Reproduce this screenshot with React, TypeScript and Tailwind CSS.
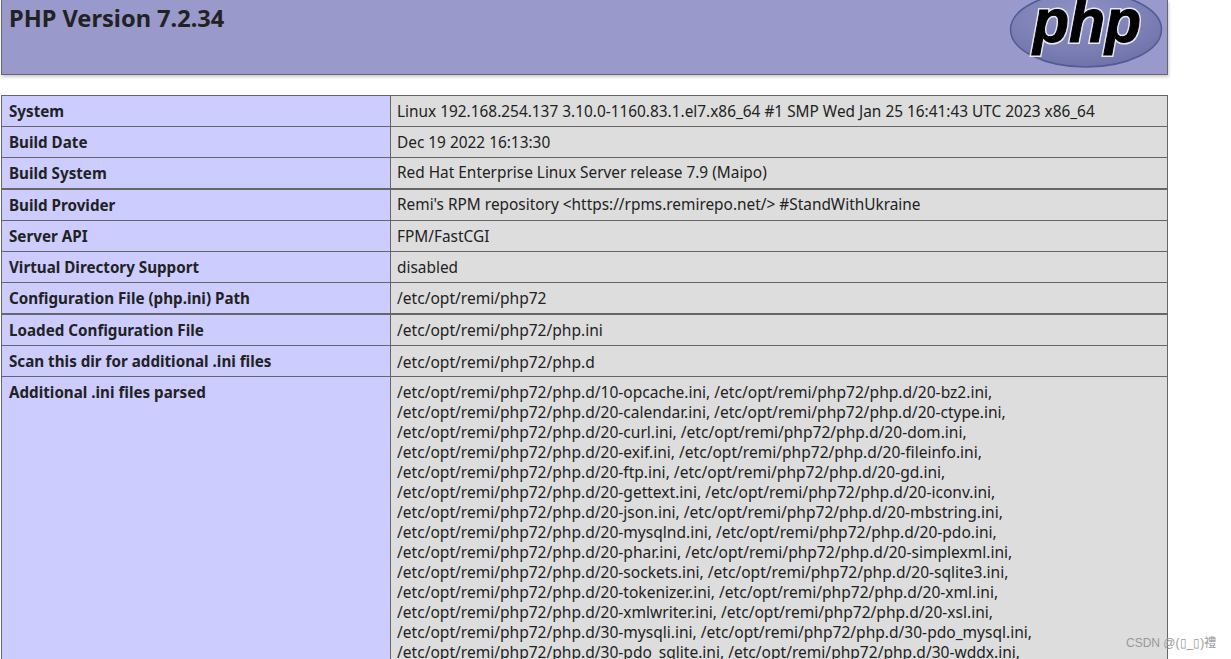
const rows: [string, string, boolean][] = [
  ["System", "Linux 192.168.254.137 3.10.0-1160.83.1.el7.x86_64 #1 SMP Wed Jan 25 16:41:43 UTC 2023 x86_64", false],
  ["Build Date", "Dec 19 2022 16:13:30", false],
  ["Build System", "Red Hat Enterprise Linux Server release 7.9 (Maipo)", false],
  ["Build Provider", "Remi's RPM repository <https://rpms.remirepo.net/> #StandWithUkraine", true],
  ["Server API", "FPM/FastCGI", false],
  ["Virtual Directory Support", "disabled", false],
  ["Configuration File (php.ini) Path", "/etc/opt/remi/php72", false],
  ["Loaded Configuration File", "/etc/opt/remi/php72/php.ini", true],
  ["Scan this dir for additional .ini files", "/etc/opt/remi/php72/php.d", false],
];

const iniLines = [
  "/etc/opt/remi/php72/php.d/10-opcache.ini, /etc/opt/remi/php72/php.d/20-bz2.ini,",
  "/etc/opt/remi/php72/php.d/20-calendar.ini, /etc/opt/remi/php72/php.d/20-ctype.ini,",
  "/etc/opt/remi/php72/php.d/20-curl.ini, /etc/opt/remi/php72/php.d/20-dom.ini,",
  "/etc/opt/remi/php72/php.d/20-exif.ini, /etc/opt/remi/php72/php.d/20-fileinfo.ini,",
  "/etc/opt/remi/php72/php.d/20-ftp.ini, /etc/opt/remi/php72/php.d/20-gd.ini,",
  "/etc/opt/remi/php72/php.d/20-gettext.ini, /etc/opt/remi/php72/php.d/20-iconv.ini,",
  "/etc/opt/remi/php72/php.d/20-json.ini, /etc/opt/remi/php72/php.d/20-mbstring.ini,",
  "/etc/opt/remi/php72/php.d/20-mysqlnd.ini, /etc/opt/remi/php72/php.d/20-pdo.ini,",
  "/etc/opt/remi/php72/php.d/20-phar.ini, /etc/opt/remi/php72/php.d/20-simplexml.ini,",
  "/etc/opt/remi/php72/php.d/20-sockets.ini, /etc/opt/remi/php72/php.d/20-sqlite3.ini,",
  "/etc/opt/remi/php72/php.d/20-tokenizer.ini, /etc/opt/remi/php72/php.d/20-xml.ini,",
  "/etc/opt/remi/php72/php.d/20-xmlwriter.ini, /etc/opt/remi/php72/php.d/20-xsl.ini,",
  "/etc/opt/remi/php72/php.d/30-mysqli.ini, /etc/opt/remi/php72/php.d/30-pdo_mysql.ini,",
  "/etc/opt/remi/php72/php.d/30-pdo_sqlite.ini, /etc/opt/remi/php72/php.d/30-wddx.ini,",
];

const PhpLogo = () => (
  <svg width="156" height="74" viewBox="0 0 156 74" className="block">
    <defs>
      <radialGradient id="phpOval" cx="0.45" cy="0.3" r="0.75">
        <stop offset="0" stopColor="#8f92c4" />
        <stop offset="0.6" stopColor="#7c80b5" />
        <stop offset="1" stopColor="#6c70a8" />
      </radialGradient>
    </defs>
    <ellipse cx="79" cy="29.5" rx="75.5" ry="37.5" fill="url(#phpOval)" stroke="#4f5b93" strokeWidth="1.5" />
    <text
      x="26"
      y="42"
      fontFamily="'Liberation Sans', sans-serif"
      fontWeight="700"
      fontStyle="italic"
      fontSize="62"
      textLength="108"
      lengthAdjust="spacingAndGlyphs"
      fill="#000"
      stroke="#e8e8f4"
      strokeWidth="4"
    >
      php
    </text>
    <text
      x="26"
      y="42"
      aria-hidden="true"
      fontFamily="'Liberation Sans', sans-serif"
      fontWeight="700"
      fontStyle="italic"
      fontSize="62"
      textLength="108"
      lengthAdjust="spacingAndGlyphs"
      fill="#000"
      stroke="#000"
      strokeWidth="1"
    >
      php
    </text>
  </svg>
);

const App = () => {
  return (
    <div className="relative h-[659px] w-[1231px] overflow-hidden bg-white font-['Noto_Sans',sans-serif] text-[15.4px] leading-[20px] text-[#222]">
      {/* Header */}
      <div className="ml-px flex h-[75px] w-[1167px] justify-between border border-t-0 border-[#666] bg-[#9999cc] pl-[7px] pr-[4px] shadow-[1px_2px_3px_#ccc]">
        <h1 className="text-[23.6px] leading-[37px] font-bold">PHP Version 7.2.34</h1>
        <PhpLogo />
      </div>

      {/* Info table */}
      <table className="mt-5 ml-px w-[1167px] table-fixed border-collapse">
        <tbody>
          {rows.map(([label, value, thick]) => (
            <tr key={label} className={thick ? "h-[32px]" : "h-[31px]"}>
              <td
                className={
                  thick
                    ? "w-[389px] border border-t-2 border-[#666] bg-[#ccccff] px-[7px] pt-px align-middle text-[15.2px] font-bold"
                    : "w-[389px] border border-[#666] bg-[#ccccff] px-[7px] align-middle text-[15.2px] font-bold"
                }
              >
                {label}
              </td>
              <td
                className={
                  value.startsWith("/etc")
                    ? thick
                      ? "border border-t-2 border-[#666] bg-[#dddddd] px-[6px] pt-px align-middle text-[15.55px] whitespace-nowrap"
                      : "border border-[#666] bg-[#dddddd] px-[6px] pt-px align-middle text-[15.55px] whitespace-nowrap"
                    : thick
                      ? "border border-t-2 border-[#666] bg-[#dddddd] px-[6px] pt-px align-middle whitespace-nowrap"
                      : "border border-[#666] bg-[#dddddd] px-[6px] pt-px align-middle whitespace-nowrap"
                }
              >
                {value}
              </td>
            </tr>
          ))}
          <tr>
            <td className="border border-[#666] bg-[#ccccff] px-[7px] pt-[5px] align-top text-[15.2px] font-bold">
              Additional .ini files parsed
            </td>
            <td className="border border-[#666] bg-[#dddddd] px-[6px] pt-[5px] align-top text-[15.55px] whitespace-nowrap">
              {iniLines.map((line) => (
                <div key={line}>{line}</div>
              ))}
            </td>
          </tr>
        </tbody>
      </table>

      {/* Watermark */}
      <div className="absolute top-[635px] left-[1126px] font-['Liberation_Sans','Noto_Sans_CJK_SC',sans-serif] text-[12px] leading-4 whitespace-nowrap text-[#999]">
        CSDN @(▯_▯)禮
      </div>
    </div>
  );
};

export default App;
